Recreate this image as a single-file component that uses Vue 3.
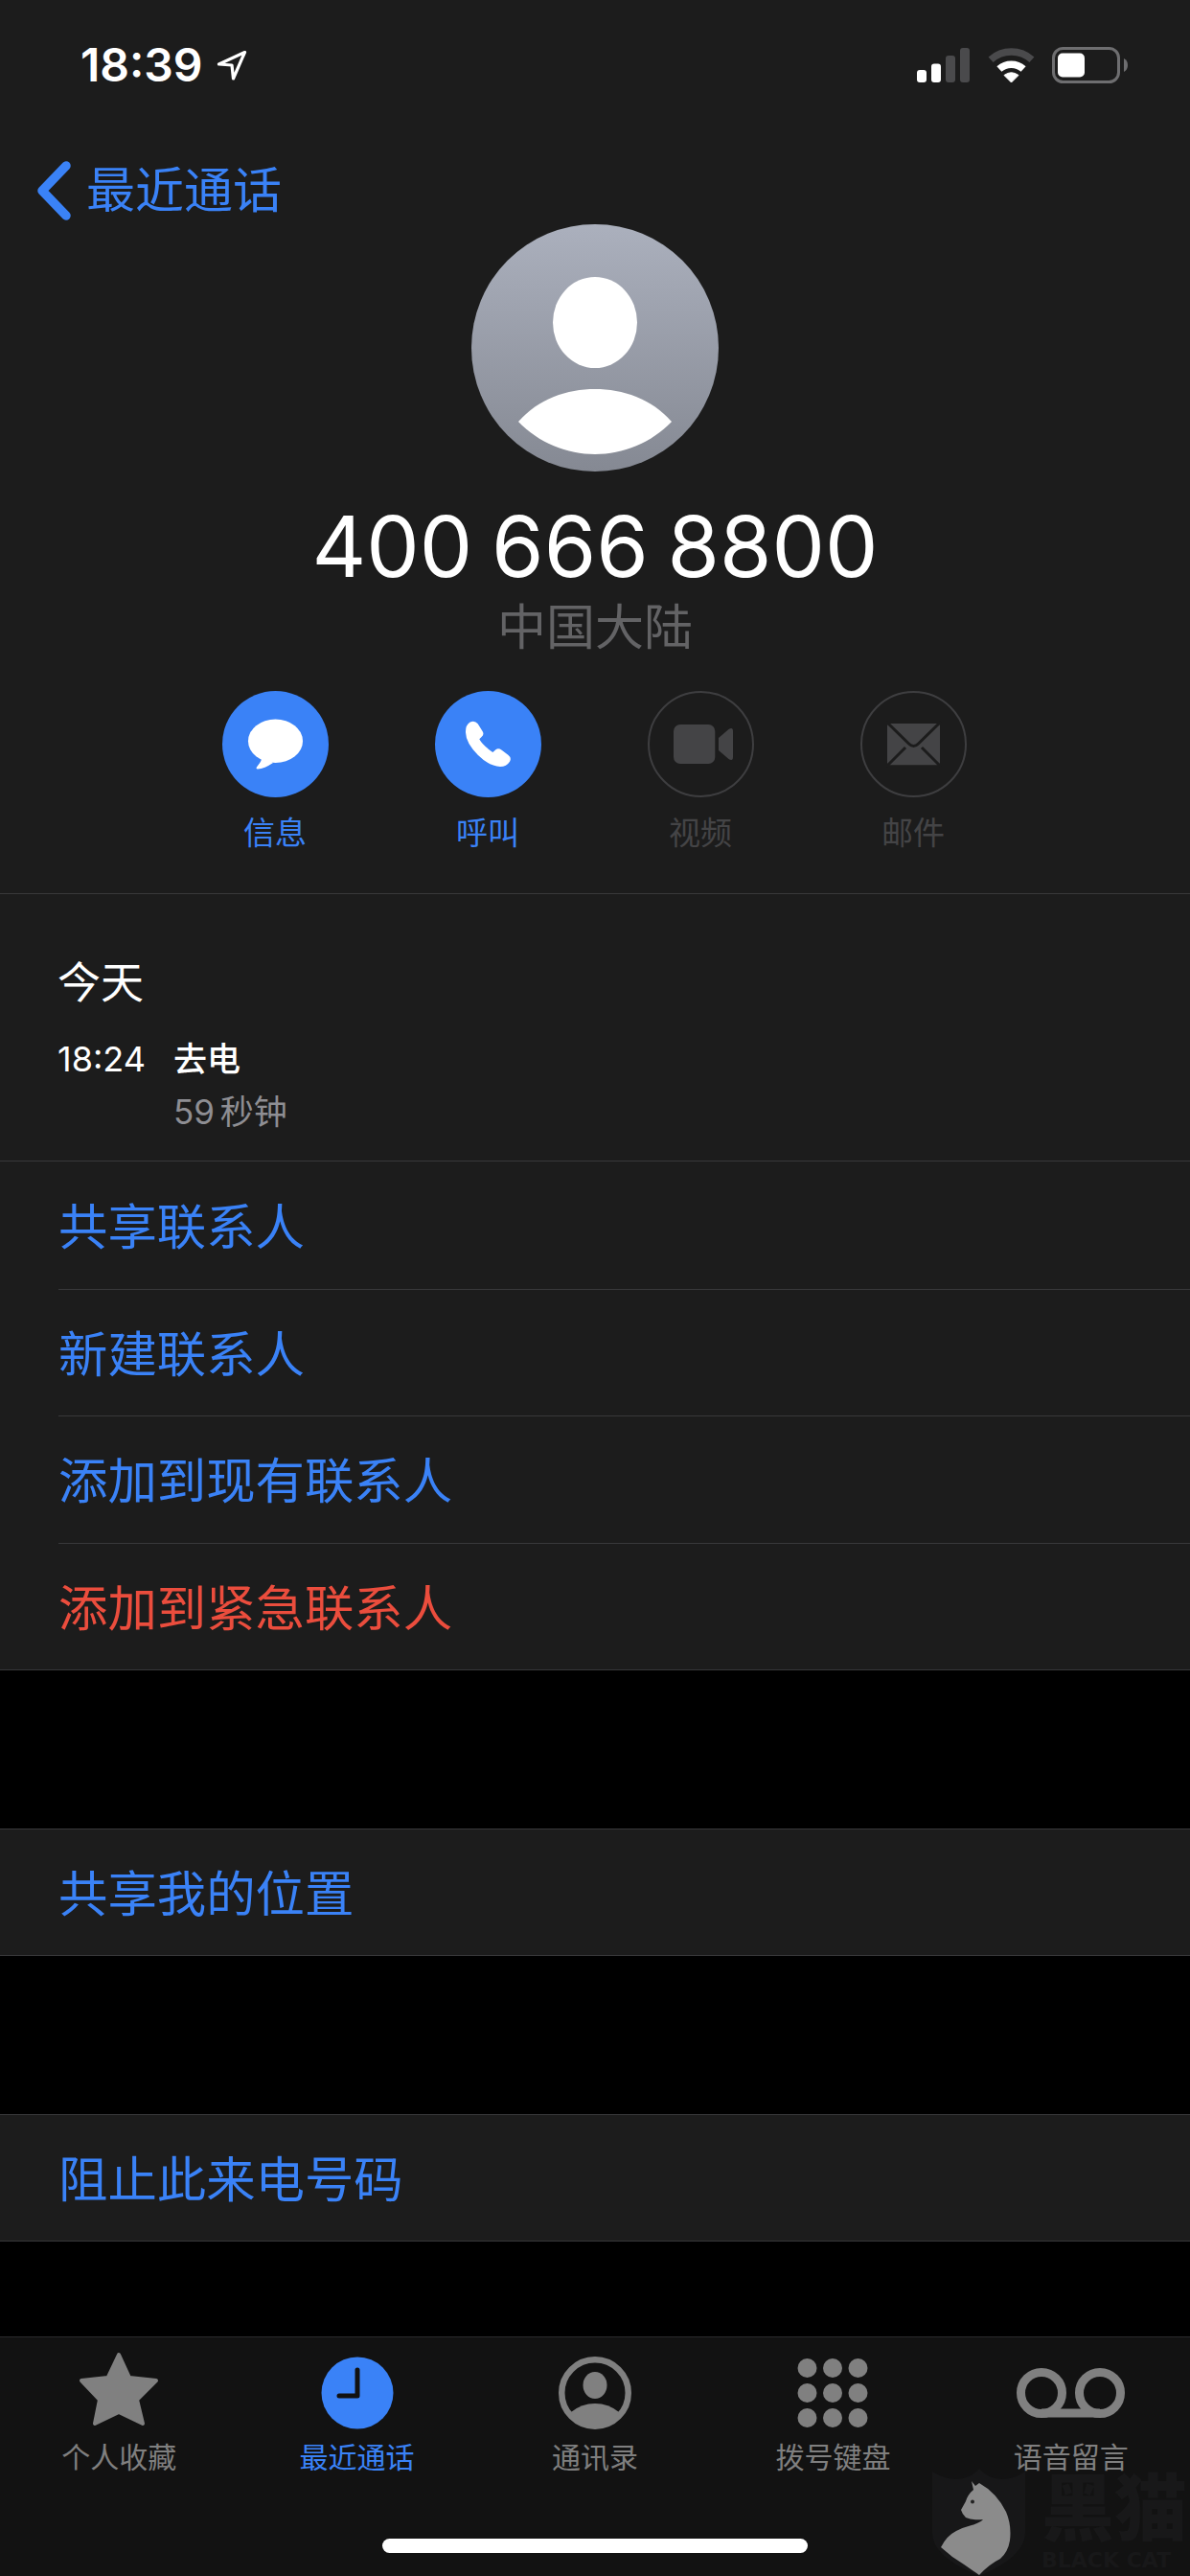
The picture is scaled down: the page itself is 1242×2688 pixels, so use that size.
<template>
  <div class="screen">
    <div class="status">
      <div class="status-left">
        <span class="clock">18:39</span>
        <svg class="loc" width="36" height="36" viewBox="0 0 36 36">
          <path d="M30.5 3.5 L3.5 16 L17 17 L18.5 31 Z" fill="none" stroke="#fff" stroke-width="3.2" stroke-linejoin="round" />
        </svg>
      </div>
      <div class="status-right">
        <svg width="55" height="36" viewBox="0 0 55 36">
          <rect x="0" y="23" width="10" height="13" rx="3" fill="#fff" />
          <rect x="15" y="16.5" width="10" height="19.5" rx="3" fill="#fff" />
          <rect x="30" y="8" width="10" height="28" rx="3" fill="#4a4a4c" />
          <rect x="45" y="0" width="10" height="36" rx="3" fill="#4a4a4c" />
        </svg>
        <svg width="50" height="42" viewBox="0 0 50 42">
          <path d="M4.1 15.2 A32 32 0 0 1 46.9 15.2" fill="none" stroke="#4a4a4c" stroke-width="7.5" />
          <path d="M12.9 25 A18.8 18.8 0 0 1 38.1 25" fill="none" stroke="#fff" stroke-width="7.5" />
          <path d="M25.5 39 L18 31.5 Q25.5 26 33 31.5 Z" fill="#fff" stroke="#fff" stroke-width="1" stroke-linejoin="round" />
        </svg>
        <svg width="80" height="38" viewBox="0 0 80 38">
          <rect x="1.5" y="1.5" width="68" height="35" rx="10" fill="none" stroke="#6e6e70" stroke-width="3" />
          <rect x="6" y="6.5" width="28" height="25" rx="5" fill="#fff" />
          <path d="M75 12 Q79 14 79 19 Q79 24 75 26 Z" fill="#6e6e70" />
        </svg>
      </div>
    </div>

    <div class="nav">
      <svg width="37" height="64" viewBox="0 0 37 64">
        <path d="M31 6 L6 32 L31 58" fill="none" stroke="#3a82f7" stroke-width="9.5" stroke-linecap="round" stroke-linejoin="round" />
      </svg>
      <span class="back-text">最近通话</span>
    </div>

    <div class="header">
      <svg class="avatar" width="258" height="258" viewBox="0 0 258 258">
        <defs>
          <linearGradient id="avatarBg" x1="0" y1="0" x2="0" y2="1">
            <stop offset="0" stop-color="#abb0bd" />
            <stop offset="1" stop-color="#858993" />
          </linearGradient>
        </defs>
        <circle cx="129" cy="129" r="129" fill="url(#avatarBg)" />
        <ellipse cx="129" cy="102.5" rx="44" ry="47.5" fill="#fff" />
        <path d="M49 206 C70 182 100 172 129 172 C158 172 188 182 209 206 C188 228 158 240 129 240 C100 240 70 228 49 206 Z" fill="#fff" />
      </svg>
      <div class="number">400 666 8800</div>
      <div class="region">中国大陆</div>

      <div class="actions">
        <div class="action">
          <svg width="111" height="111" viewBox="0 0 111 111">
            <circle cx="55.5" cy="55.5" r="55.5" fill="#3a82f7" />
            <ellipse cx="55.5" cy="52.3" rx="28.5" ry="22.7" fill="#fff" />
            <path d="M41 68 Q42 72 37 78 Q34 81.5 37 81.5 Q44 81 53 75 Z" fill="#fff" />
          </svg>
          <span class="action-label">信息</span>
        </div>
        <div class="action">
          <svg width="111" height="111" viewBox="0 0 111 111">
            <circle cx="55.5" cy="55.5" r="55.5" fill="#3a82f7" />
            <path d="M36.3 32.7 Q41.3 30 44.7 34.3 L49.7 42.3 Q51.7 45.7 48.3 48.3 L46.3 50.3 Q49.7 56.7 60.3 64 L63.7 61 Q66.3 59.3 69.7 61.7 L76.3 66.7 Q80.3 69.7 78 73.7 Q74.7 79 68 79 Q56.3 78.3 44.7 66.7 Q32.3 54.3 32 43.3 Q31.7 35.7 36.3 32.7 Z" fill="#fff" />
          </svg>
          <span class="action-label">呼叫</span>
        </div>
        <div class="action off">
          <svg width="111" height="111" viewBox="0 0 111 111">
            <circle cx="55.5" cy="55.5" r="54.5" fill="none" stroke="#3e3e40" stroke-width="2" />
            <rect x="27" y="35" width="43.3" height="41" rx="7" fill="#444446" />
            <path d="M74 49 L84.5 40 Q89 37.5 89 42 V69 Q89 73.5 84.5 71 L74 62 Z" fill="#444446" />
          </svg>
          <span class="action-label">视频</span>
        </div>
        <div class="action off">
          <svg width="111" height="111" viewBox="0 0 111 111">
            <circle cx="55.5" cy="55.5" r="54.5" fill="none" stroke="#3e3e40" stroke-width="2" />
            <rect x="28" y="34" width="55" height="43.3" rx="2.5" fill="#444446" />
            <path d="M27 32 L50.5 55 Q55.5 60 60.5 55 L84 32 M27 79 L47 59 M84 79 L64 59" fill="none" stroke="#1c1c1c" stroke-width="3" />
          </svg>
          <span class="action-label">邮件</span>
        </div>
      </div>
    </div>

    <div class="calls">
      <div class="calls-day">今天</div>
      <div class="call">
        <span class="call-time">18:24</span>
        <div>
          <div class="call-type">去电</div>
          <div class="call-len">59 秒钟</div>
        </div>
      </div>
    </div>

    <div class="group first">
      <div v-for="item in contactRows" :key="item.text" class="row" :class="{ danger: item.danger }">
        {{ item.text }}
      </div>
    </div>
    <div class="group">
      <div class="row">共享我的位置</div>
    </div>
    <div class="group">
      <div class="row">阻止此来电号码</div>
    </div>

    <div class="tabbar">
      <div class="tabs">
        <div class="tab">
          <svg width="90" height="88" viewBox="0 0 90 88">
            <path d="M45 4 L56 28 L84 31 L64 51 L70 76 L45 64 L20 76 L25 51 L6 31 L33.6 28 Z" fill="#808080" stroke="#808080" stroke-width="4" stroke-linejoin="round" />
          </svg>
          <span class="tab-label">个人收藏</span>
        </div>
        <div class="tab active">
          <svg width="90" height="88" viewBox="0 0 90 88">
            <circle cx="45" cy="44" r="37.5" fill="#3a82f7" />
            <path d="M45 20 V47 H26" fill="none" stroke="#121212" stroke-width="5" stroke-linecap="round" stroke-linejoin="round" />
          </svg>
          <span class="tab-label">最近通话</span>
        </div>
        <div class="tab">
          <svg width="90" height="88" viewBox="0 0 90 88">
            <circle cx="45" cy="44" r="34.75" fill="none" stroke="#808080" stroke-width="6.5" />
            <ellipse cx="45" cy="36" rx="12.5" ry="14" fill="#808080" />
            <path d="M20 64 Q31 55 45 55 Q59 55 70 64 Q60 80 45 80 Q30 80 20 64 Z" fill="#808080" />
          </svg>
          <span class="tab-label">通讯录</span>
        </div>
        <div class="tab">
          <svg width="90" height="88" viewBox="0 0 90 88">
            <template v-for="y in [18, 44, 70]" :key="y">
              <circle v-for="x in [18.5, 45, 71.5]" :key="x" :cx="x" :cy="y" r="10" fill="#808080" />
            </template>
          </svg>
          <span class="tab-label">拨号键盘</span>
        </div>
        <div class="tab">
          <svg width="120" height="88" viewBox="0 0 120 88">
            <circle cx="29" cy="44" r="21.5" fill="none" stroke="#808080" stroke-width="9" />
            <circle cx="90" cy="44" r="21.5" fill="none" stroke="#808080" stroke-width="9" />
            <path d="M29 65 H90" stroke="#808080" stroke-width="9" />
          </svg>
          <span class="tab-label">语音留言</span>
        </div>
      </div>
      <div class="home"></div>
    </div>

    <!-- watermark sits over the tab bar -->
    <div class="mark">
      <svg width="112" height="115" viewBox="8 10 112 115">
        <path d="M13 16 Q26 24 38 24 Q52 24 62 13 Q72 24 86 24 Q98 24 110 16 V80 Q110 105 62 125 Q13 105 13 80 Z" fill="#171718" />
        <path d="M54 26 L58 31 L62 28 Q80 38 90 58 Q96 72 94 88 Q92 100 84 107 Q72 113 62 124 Q48 114 34 105 L22 95 Q28 83 38 78 Q46 74 54 72 Q62 70 66 66 Q55 67 48 64 Q44 60 43 56 L48 47 Q50 40 56 35 Z" fill="#8b8b8b" />
        <circle cx="55" cy="47.5" r="2" fill="#222" />
      </svg>
      <div class="mark-text">
        <span class="mark-cn">黑猫</span>
        <span class="mark-en">BLACK CAT</span>
      </div>
    </div>
  </div>
</template>

<script setup>
const contactRows = [
  { text: '共享联系人' },
  { text: '新建联系人' },
  { text: '添加到现有联系人' },
  { text: '添加到紧急联系人', danger: true },
]
</script>

<style scoped>
.screen {
  position: relative;
  display: flex;
  flex-direction: column;
  width: 1242px;
  height: 2688px;
  overflow: hidden;
  background: #000;
  color: #fff;
  font-family: Inter, 'Noto Sans CJK SC', sans-serif;
}

.status {
  display: flex;
  justify-content: space-between;
  align-items: center;
  height: 135px;
  padding: 0 64px 0 84px;
  background: #1c1c1c;
}

.status-left {
  display: flex;
  align-items: center;
  gap: 13px;
}

.clock {
  margin-top: 1px;
  font-size: 48px;
  font-weight: 600;
  line-height: 60px;
}

.loc {
  margin-top: 2px;
}

.status-right {
  display: flex;
  align-items: center;
  gap: 18px;
}

.nav {
  display: flex;
  align-items: center;
  gap: 15px;
  height: 99px;
  padding: 29px 0 0 38px;
  box-sizing: border-box;
  background: #1c1c1c;
}

.back-text {
  font-size: 51px;
  line-height: 70px;
  color: #3a82f7;
}

.header {
  display: flex;
  flex-direction: column;
  align-items: center;
  height: 698px;
  background: #1c1c1c;
}

.avatar {
  flex-shrink: 0;
}

.number {
  margin-top: 28px;
  font-size: 88px;
  line-height: 100px;
  word-spacing: -5px;
}

.region {
  margin-top: 10px;
  font-size: 51px;
  line-height: 50px;
  color: #636365;
}

.actions {
  display: flex;
  margin-top: 41px;
  margin-right: 2px;
}

.action {
  display: flex;
  flex-direction: column;
  align-items: center;
  width: 222px;
}

.action-label {
  margin-top: 16px;
  font-size: 33px;
  line-height: 42px;
  color: #3a82f7;
}

.off .action-label {
  color: #444446;
}

.calls {
  height: 279px;
  box-sizing: border-box;
  padding: 63px 0 0 60px;
  border-top: 1px solid #38383a;
  background: #1c1c1c;
}

.calls-day {
  font-size: 45px;
  line-height: 60px;
}

.call {
  display: flex;
  margin-top: 24px;
}

.call-time {
  width: 121px;
  font-size: 36px;
  line-height: 50px;
}

.call-type {
  font-size: 35px;
  font-weight: 500;
  line-height: 50px;
}

.call-len {
  margin-top: 5px;
  font-size: 35px;
  line-height: 50px;
  color: #8e8e93;
  word-spacing: -4px;
}

.group {
  margin-top: 165px;
  padding-left: 61px;
  border-top: 1px solid #38383a;
  border-bottom: 1px solid #38383a;
  background: #1c1c1c;
}

.group.first {
  margin-top: 0;
}

.row {
  display: flex;
  align-items: center;
  height: 131px;
  padding-bottom: 4px;
  box-sizing: border-box;
  font-size: 51.4px;
  color: #3a82f7;
}

.first .row {
  height: 132.5px;
}

.first .row + .row {
  border-top: 1px solid #38383a;
}

.row.danger {
  color: #eb4d3d;
}

.tabbar {
  margin-top: auto;
  height: 250px;
  box-sizing: border-box;
  padding-top: 14px;
  border-top: 1px solid #2a2a2c;
  background: #121212;
}

.tabs {
  display: flex;
}

.tab {
  display: flex;
  flex: 1;
  flex-direction: column;
  align-items: center;
}

.tab-label {
  margin-top: 3px;
  font-size: 30px;
  line-height: 40px;
  color: #7f7f7f;
}

.active .tab-label {
  color: #3a82f7;
}

.home {
  width: 444px;
  height: 15px;
  margin: 65px auto 0;
  border-radius: 8px;
  background: #fff;
}

.mark {
  position: absolute;
  top: 2573px;
  left: 968px;
  display: flex;
  gap: 7px;
  white-space: nowrap;
}

.mark-text {
  display: flex;
  flex-direction: column;
  margin-top: 12px;
}

.mark-cn {
  font-size: 76px;
  font-weight: 900;
  line-height: 65px;
  color: #181819;
}

.mark-en {
  margin-top: 9px;
  font-family: 'DejaVu Sans', sans-serif;
  font-size: 22px;
  font-weight: 700;
  line-height: 26px;
  color: #181819;
}
</style>

<style>
html,
body {
  margin: 0;
  background: #000;
}
</style>
